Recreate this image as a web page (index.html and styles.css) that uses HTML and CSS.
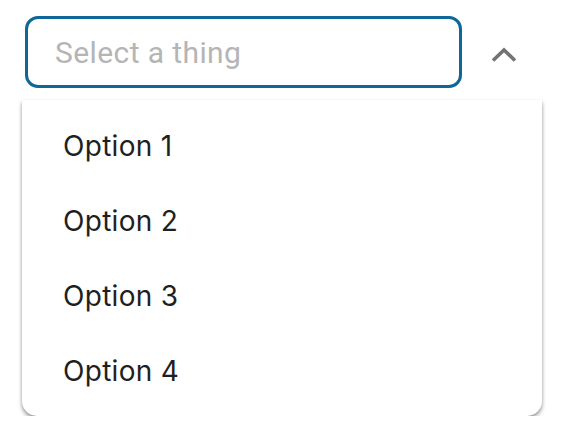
FILE: index.html
```html
<!DOCTYPE html>
<html lang="en">
<head>
    <meta charset="UTF-8">
    <meta name="viewport" content="width=device-width, initial-scale=1.0">
    <title>Select</title>
    <link rel="stylesheet" href="styles.css">
</head>
<body>
    <div class="select">
        <div class="select-row">
            <input class="select-input" type="text" placeholder="Select a thing">
            <span class="select-toggle">
                <svg width="26" height="16" viewBox="0 0 26 16">
                    <path d="M2 13.5 L13 3 L24 13.5" fill="none" stroke="#737373" stroke-width="3.6"/>
                </svg>
            </span>
        </div>
        <ul class="menu">
            <li class="menu-item">Option 1</li>
            <li class="menu-item">Option 2</li>
            <li class="menu-item">Option 3</li>
            <li class="menu-item">Option 4</li>
        </ul>
    </div>
</body>
</html>
```

FILE: styles.css
```css
body {
    margin: 0;
    background-color: #fff;
    font-family: Inter, "Noto Sans", sans-serif;
}

.select {
    display: flex;
    flex-direction: column;
    width: 520px;
    padding: 16px 0 0 22px;
}

.select-row {
    display: flex;
    align-items: center;
    padding-left: 3px;
}

.select-input {
    width: 437px;
    height: 72px;
    box-sizing: border-box;
    border: 3px solid #0e6699;
    border-radius: 13px;
    padding: 0 27px;
    font-family: Roboto, sans-serif;
    font-size: 30px;
    letter-spacing: 0.4px;
    color: #222;
    outline: none;
}

.select-input::placeholder {
    color: #b5b5b5;
}

.select-toggle {
    display: flex;
    margin-left: 29px;
    margin-top: 6px;
}

.menu {
    list-style: none;
    margin: 12px 0 0;
    padding: 8px 0;
    background-color: #fff;
    border-radius: 0 0 15px 15px;
    box-shadow: 0 3px 4px rgba(0, 0, 0, 0.35), 0 1px 3px rgba(0, 0, 0, 0.12);
}

.menu-item {
    height: 75px;
    display: flex;
    align-items: center;
    padding-left: 41px;
    font-size: 28px;
    letter-spacing: 0.3px;
    color: #1f1f1f;
}
```
